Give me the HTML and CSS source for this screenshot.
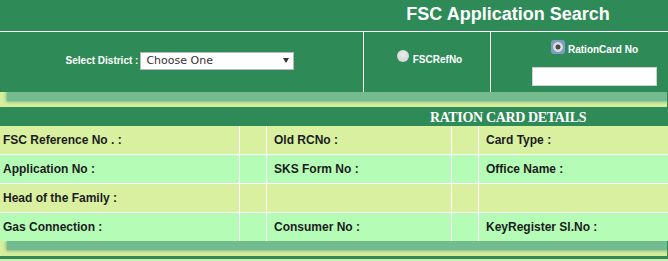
FILE: index.html
```html
<!DOCTYPE html>
<html lang="en">
  <head>
    <meta charset="UTF-8" />
    <title>FSC Application Search</title>
    <link rel="stylesheet" href="styles.css">
  </head>
  <body>
    <div class="page">
      <div class="title">FSC Application Search</div>

      <div class="search">
        <div class="cell district">
          <label class="lbl" for="district">Select District :</label>
          <span class="select-wrap">
            <select id="district">
              <option>Choose One</option>
            </select>
          </span>
        </div>
        <div class="cell ref">
          <input type="radio" class="radio" name="mode" id="refRadio" />
          <label class="opt-label" for="refRadio">FSCRefNo</label>
        </div>
        <div class="cell card">
          <div class="card-line">
            <input type="radio" class="radio" name="mode" id="cardRadio" checked />
            <label class="opt-label" for="cardRadio">RationCard No</label>
          </div>
          <input type="text" class="card-input" />
        </div>
      </div>

      <div class="sep"><div class="sep-bar"></div></div>

      <div class="details-head">RATION CARD DETAILS</div>

      <div class="details">
        <div class="row odd">
          <div class="c first">FSC Reference No . :</div>
          <div class="c"></div>
          <div class="c">Old RCNo :</div>
          <div class="c"></div>
          <div class="c">Card Type :</div>
        </div>
        <div class="row even">
          <div class="c first">Application No :</div>
          <div class="c"></div>
          <div class="c">SKS Form No :</div>
          <div class="c"></div>
          <div class="c">Office Name :</div>
        </div>
        <div class="row odd">
          <div class="c first">Head of the Family :</div>
          <div class="c"></div>
          <div class="c"></div>
          <div class="c"></div>
          <div class="c"></div>
        </div>
        <div class="row even">
          <div class="c first">Gas Connection :</div>
          <div class="c"></div>
          <div class="c">Consumer No :</div>
          <div class="c"></div>
          <div class="c">KeyRegister Sl.No :</div>
        </div>
      </div>

      <div class="sep"><div class="sep-bar"></div></div>
      <div class="foot"></div>
    </div>
  </body>
</html>
```

FILE: styles.css
```css
body {
  margin: 0;
  font-family: "Liberation Sans", Arial, sans-serif;
  background-color: #fff;
}
.page {
  width: 668px;
  background-color: #2e8b57;
}
.title {
  height: 31px;
  box-sizing: border-box;
  padding: 4px 0 0 348px;
  text-align: center;
  color: #fff;
  font-size: 18px;
  font-weight: bold;
  line-height: 21px;
}

/* search row */
.search {
  display: grid;
  grid-template-columns: 363px 126px 1fr;
  column-gap: 1px;
  height: 60px;
  border-top: 1px solid #fff;
  background-color: #fff;
}
.cell {
  background-color: #2e8b57;
}
.district {
  display: flex;
  align-items: center;
  justify-content: center;
  gap: 2px;
  padding: 0 3px 3px 0;
}
.lbl,
.opt-label {
  color: #fff;
  font-size: 10px;
  font-weight: bold;
}
.select-wrap {
  position: relative;
  display: inline-block;
}
.select-wrap::after {
  content: "";
  position: absolute;
  right: 5px;
  top: 6px;
  border-left: 3px solid transparent;
  border-right: 3px solid transparent;
  border-top: 5px solid #333;
  pointer-events: none;
}
.select-wrap select {
  appearance: none;
  -webkit-appearance: none;
  display: block;
  width: 154px;
  height: 18px;
  margin: 0;
  padding: 0 0 0 5px;
  border: 1px solid #b8b8b8;
  border-radius: 0;
  background-color: #fff;
  color: #333;
  font-family: "DejaVu Sans", Verdana, sans-serif;
  font-size: 11px;
}

.radio {
  appearance: none;
  -webkit-appearance: none;
  flex: none;
  width: 12px;
  height: 12px;
  margin: 0;
  border-radius: 50%;
  background: radial-gradient(circle at 50% 40%, #ececec, #cdcdcd);
}
.radio:checked {
  width: 14px;
  height: 14px;
  border-radius: 3px;
  background: radial-gradient(circle, #4b4b4b 0 2.2px, #dcdcdc 2.8px 4.5px, #7b9ec3 5.3px);
}
.opt-label {
  line-height: 10px;
  padding-top: 5px;
}
.ref {
  display: flex;
  align-items: flex-start;
  justify-content: center;
  gap: 4px;
  padding: 18px 0 0 5px;
}
.card {
  display: flex;
  flex-direction: column;
  align-items: center;
  padding: 8px 1px 0 31px;
}
.card-line {
  display: flex;
  align-items: flex-start;
  gap: 3px;
}
.card-input {
  width: 125px;
  height: 19px;
  box-sizing: border-box;
  margin: 12px 0 0;
  padding: 0 2px;
  border: 1px solid #d0d0d0;
  background-color: #fff;
}

/* shaded separator */
.sep {
  height: 15px;
  margin-right: 1px;
  overflow: hidden;
  background-color: #d7ee9b;
}
.sep-bar {
  height: 9px;
  margin-left: 7px;
  background-color: #74bb8f;
  box-shadow: 0 0 3px 1px #74bb8f;
}

/* details */
.details-head {
  height: 19px;
  box-sizing: border-box;
  padding: 3px 0 0 348px;
  text-align: center;
  color: #fff;
  font-family: "Liberation Serif", "Times New Roman", serif;
  font-size: 14px;
  font-weight: bold;
  letter-spacing: -0.35px;
  line-height: 16px;
}
.details {
  display: flex;
  flex-direction: column;
  gap: 1px;
  background-color: #fff;
}
.row {
  display: grid;
  grid-template-columns: 239px 26px 184px 26px 1fr;
  column-gap: 1px;
  height: 28px;
}
.c {
  display: flex;
  align-items: center;
  padding-left: 7px;
  color: #1c1c1c;
  font-size: 12px;
  font-weight: bold;
  white-space: nowrap;
}
.c.first {
  padding-left: 3px;
}
.row.odd .c {
  background-color: #d8f0a0;
}
.row.even .c {
  background-color: #b5fdb7;
}
.foot {
  height: 3px;
  background-color: #2e8b57;
  border-bottom: 10px solid #d3eca8;
}
```
